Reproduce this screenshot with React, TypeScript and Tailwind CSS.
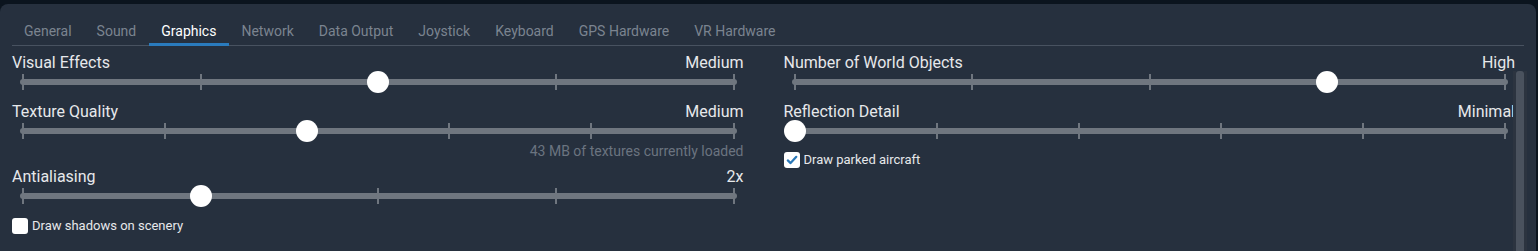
import React from 'react'

const tabs = ['General', 'Sound', 'Graphics', 'Network', 'Data Output', 'Joystick', 'Keyboard', 'GPS Hardware', 'VR Hardware']

function Slider({ steps, value, className = '' }: { steps: number; value: number; className?: string }) {
  const pct = (value / (steps - 1)) * 100
  return (
    <div className={`relative h-5 ${className}`}>
      <div className="absolute left-[8px] right-[7px] top-[7px] h-[6px] rounded-full bg-[#6f767f]" />
      <div className="absolute left-[11px] right-[10px] top-0 h-5">
        {Array.from({ length: steps }).map((_, i) => (
          <div
            key={i}
            className="absolute top-[2px] h-[16px] w-[2px] -ml-px bg-[#6f767f]"
            style={{ left: `${(i / (steps - 1)) * 100}%` }}
          />
        ))}
        <div
          className="absolute top-[-1px] h-[22px] w-[22px] -ml-[11px] rounded-full bg-white"
          style={{ left: `${pct}%` }}
        />
      </div>
    </div>
  )
}

function Row({ label, value }: { label: string; value: string }) {
  return (
    <div className="flex h-5 items-center justify-between pt-px text-[16px] text-[#e6e8eb]">
      <span>{label}</span>
      <span>{value}</span>
    </div>
  )
}

function Check({ label, checked }: { label: string; checked?: boolean }) {
  return (
    <div className="flex h-5 items-center gap-[4px] text-[13px] text-[#e6e8eb]">
      <div className="flex h-[16px] w-[16px] items-center justify-center rounded-[3px] bg-white">
        {checked && (
          <svg width="12" height="12" viewBox="0 0 12 12">
            <path d="M1.8 6.4 L4.6 9.1 L10.3 2.8" fill="none" stroke="#2a78b8" strokeWidth="2.2" strokeLinecap="round" strokeLinejoin="round" />
          </svg>
        )}
      </div>
      <span>{label}</span>
    </div>
  )
}

export default function App() {
  return (
    <div className="h-[251px] w-[1538px] overflow-hidden bg-[#0b141e] pt-[4px] pr-[2px]" style={{ fontFamily: 'Roboto, "Noto Sans", sans-serif' }}>
      <div className="h-full rounded-t-[8px] bg-[#26303e] pt-[14px]">
        <div className="mx-3 flex h-[28px] border-b border-[#485260]">
          {tabs.map(t => (
            <div
              key={t}
              className={`relative flex items-center pl-3 pr-[13px] text-[14px] ${t === 'Graphics' ? 'text-white' : 'text-[#7b8490]'}`}
            >
              {t}
              {t === 'Graphics' && <div className="absolute bottom-[-1px] left-0 right-0 h-[3px] bg-[#2a7bbd]" />}
            </div>
          ))}
        </div>
        <div className="flex pl-3 pt-[6px]">
          <div className="grid w-[1503px] grid-cols-2 gap-x-[40px]">
            <div className="flex flex-col">
              <Row label="Visual Effects" value="Medium" />
              <Slider steps={5} value={2} className="mb-[9px]" />
              <Row label="Texture Quality" value="Medium" />
              <Slider steps={6} value={2} />
              <div className="flex h-5 items-center justify-end text-[14px] text-[#6b7480]">43 MB of textures currently loaded</div>
              <div className="mt-[5px]">
                <Row label="Antialiasing" value="2x" />
              </div>
              <Slider steps={5} value={1} />
              <div className="mt-[10px]">
                <Check label="Draw shadows on scenery" />
              </div>
            </div>
            <div className="flex flex-col">
              <Row label="Number of World Objects" value="High" />
              <Slider steps={5} value={3} className="mb-[9px]" />
              <Row label="Reflection Detail" value="Minimal" />
              <Slider steps={6} value={0} />
              <div className="mt-[9px]">
                <Check label="Draw parked aircraft" checked />
              </div>
            </div>
          </div>
          <div className="ml-[-2px] mt-[19px] h-[200px] border-l-[3px] border-r-[3px] border-[#2c3440] bg-transparent">
            <div className="h-full w-[8px] rounded-t-[3px] bg-[#4a525e]" />
          </div>
        </div>
      </div>
    </div>
  )
}
